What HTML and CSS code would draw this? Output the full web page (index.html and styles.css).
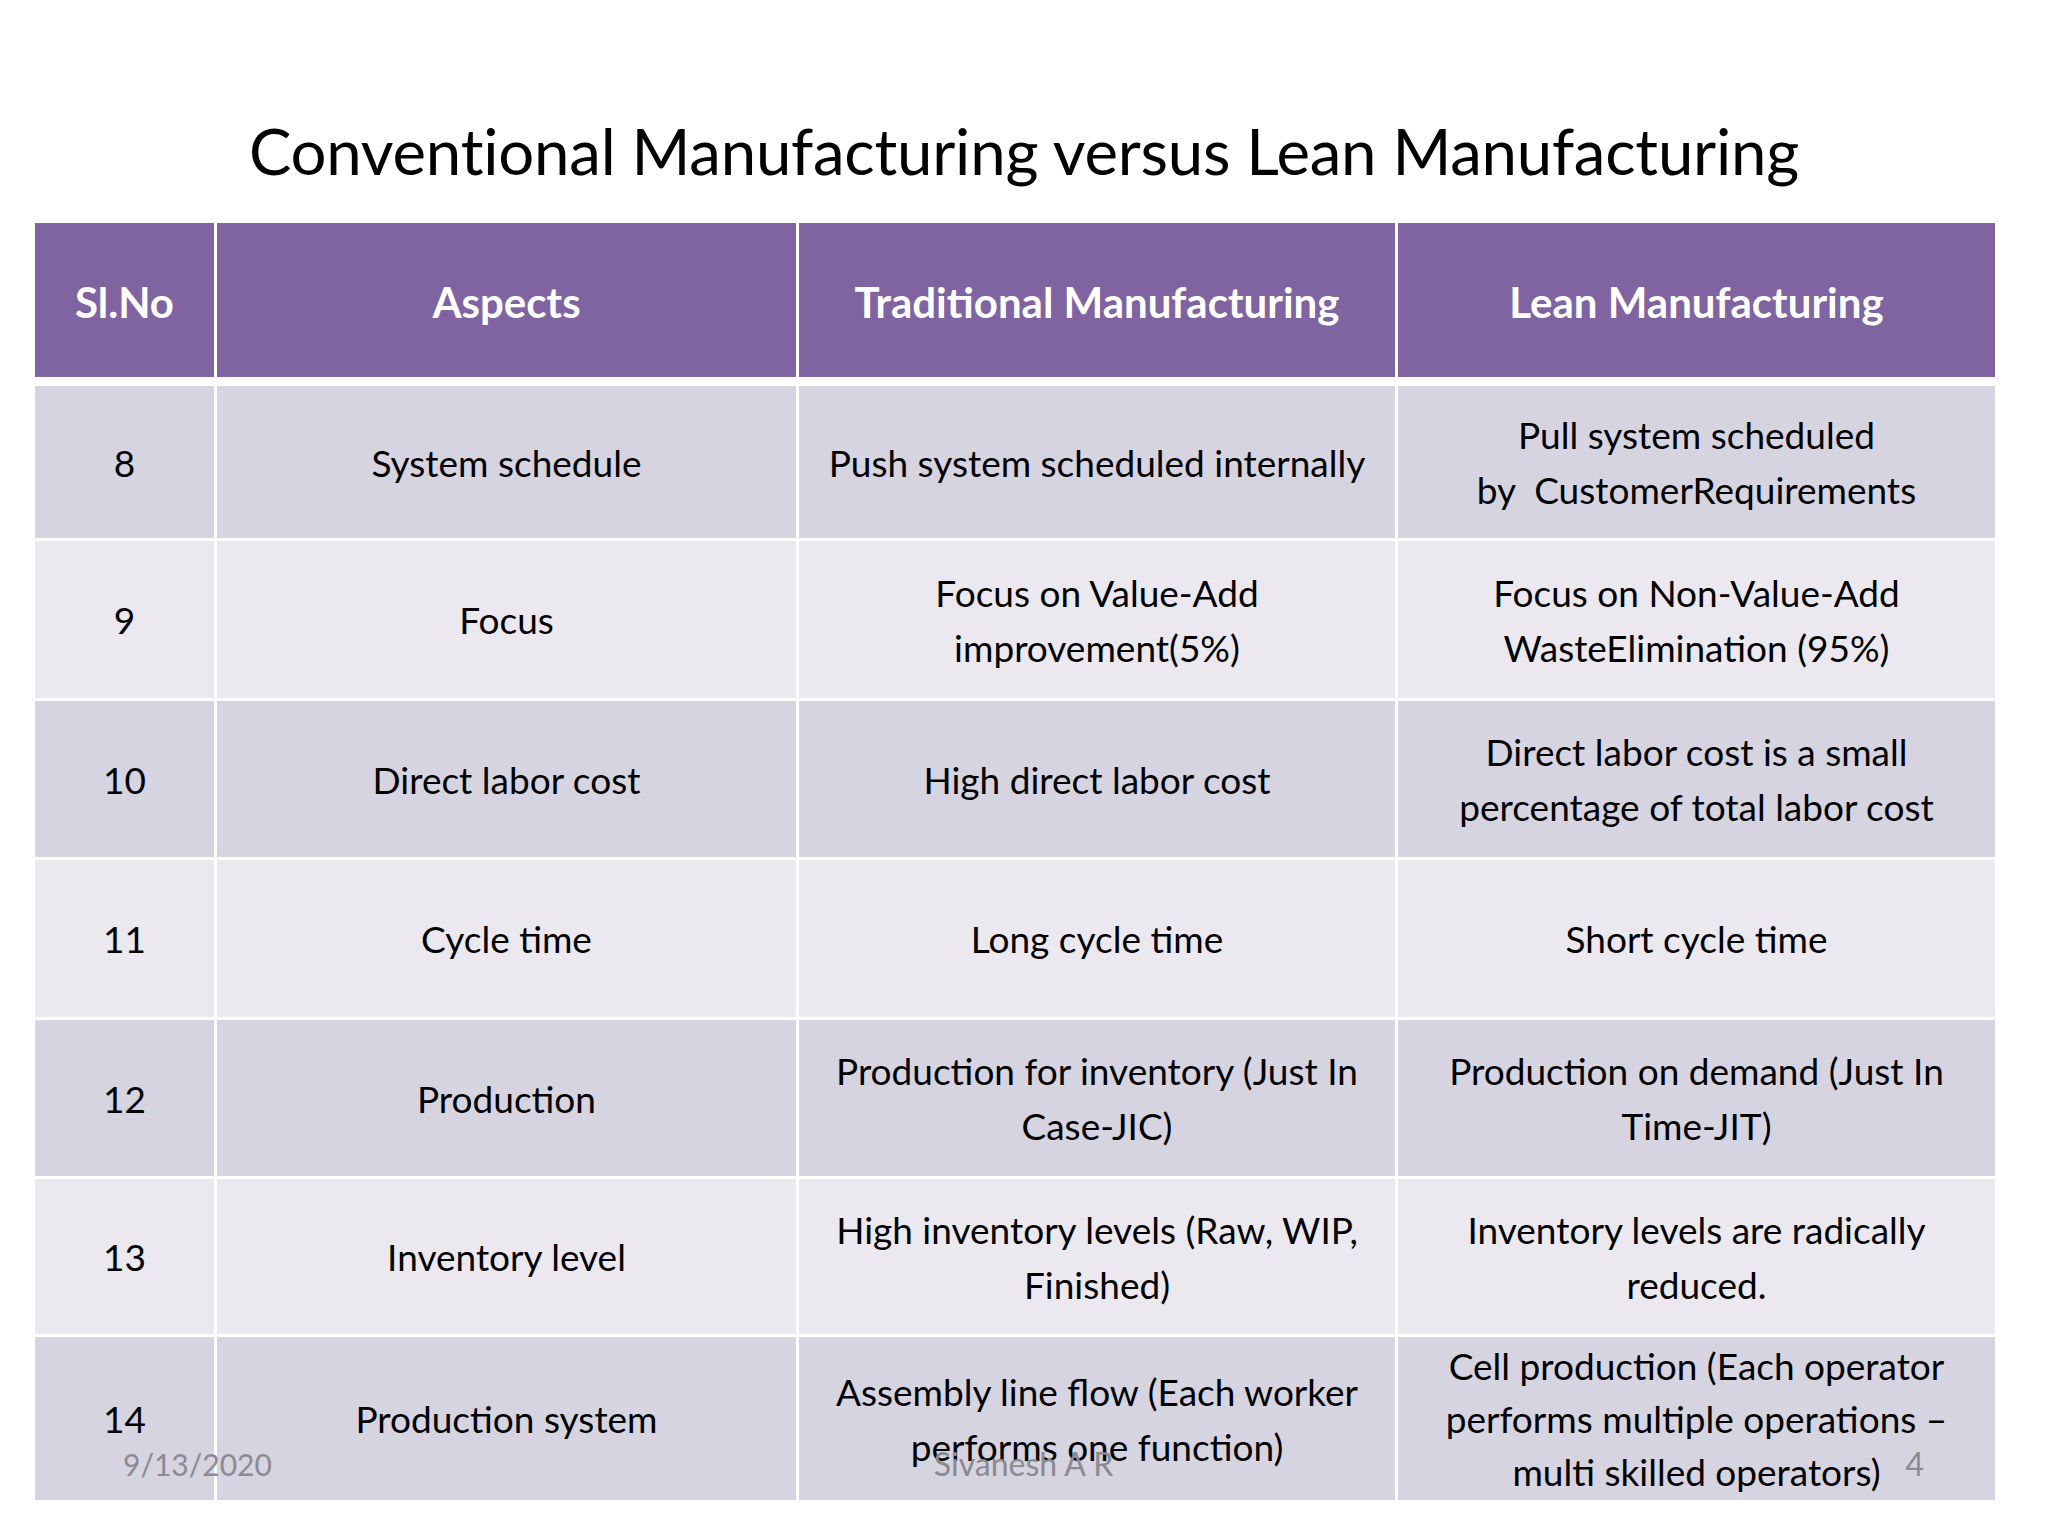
FILE: index.html
```html
<!DOCTYPE html>
<html>
<head>
<meta charset="utf-8">
<link rel="stylesheet" href="styles.css">
</head>
<body>
<div class="slide">
  <h1 class="title">Conventional Manufacturing versus Lean Manufacturing</h1>
  <div class="table">
    <div class="head">
      <div class="cell">Sl.No</div>
      <div class="cell">Aspects</div>
      <div class="cell">Traditional Manufacturing</div>
      <div class="cell">Lean Manufacturing</div>
    </div>
    <div class="body">
      <div class="cell odd">8</div>
      <div class="cell odd">System schedule</div>
      <div class="cell odd">Push system scheduled internally</div>
      <div class="cell odd">Pull system scheduled<br>by&nbsp; CustomerRequirements</div>

      <div class="cell even">9</div>
      <div class="cell even">Focus</div>
      <div class="cell even">Focus on Value-Add<br>improvement(5%)</div>
      <div class="cell even">Focus on Non-Value-Add<br>WasteElimination (95%)</div>

      <div class="cell odd">10</div>
      <div class="cell odd">Direct labor cost</div>
      <div class="cell odd">High direct labor cost</div>
      <div class="cell odd">Direct labor cost is a small<br>percentage of total labor cost</div>

      <div class="cell even">11</div>
      <div class="cell even">Cycle time</div>
      <div class="cell even">Long cycle time</div>
      <div class="cell even">Short cycle time</div>

      <div class="cell odd">12</div>
      <div class="cell odd">Production</div>
      <div class="cell odd">Production for inventory (Just In<br>Case-JIC)</div>
      <div class="cell odd">Production on demand (Just In<br>Time-JIT)</div>

      <div class="cell even">13</div>
      <div class="cell even">Inventory level</div>
      <div class="cell even">High inventory levels (Raw, WIP,<br>Finished)</div>
      <div class="cell even">Inventory levels are radically<br>reduced.</div>

      <div class="cell odd">14</div>
      <div class="cell odd">Production system</div>
      <div class="cell odd">Assembly line flow (Each worker<br>performs one function)</div>
      <div class="cell odd tight">Cell production (Each operator<br>performs multiple operations –<br>multi skilled operators)</div>
    </div>
  </div>
  <div class="footer">
    <span class="f-date">9/13/2020</span>
    <span class="f-author">Sivanesh A R</span>
    <span class="f-num">4</span>
  </div>
</div>
</body>
</html>
```
FILE: styles.css
```css
html, body {
  margin: 0;
  padding: 0;
  background: #ffffff;
}

.slide {
  position: relative;
  width: 2048px;
  height: 1536px;
  box-sizing: border-box;
  padding-top: 112px;
  font-family: Lato, "Liberation Sans", sans-serif;
  color: #000000;
}

.title {
  margin: 0;
  font-weight: 400;
  font-size: 63.5px;
  line-height: 77px;
  text-align: center;
  letter-spacing: -0.2px;
}

.table {
  margin: 34px 0 0 35px;
  width: 1960px;
}

.head,
.body {
  display: grid;
  grid-template-columns: 179px 579px 596px 597px;
  column-gap: 3px;
  row-gap: 3px;
}

.head {
  grid-template-rows: 154px;
}

.body {
  margin-top: 9px;
  grid-template-rows: 152px 157px 156px 157px 156px 155px 163px;
}

.cell {
  display: flex;
  align-items: center;
  justify-content: center;
  text-align: center;
  white-space: nowrap;
  font-size: 37px;
  line-height: 55px;
}

.head .cell {
  background: #8064a2;
  color: #ffffff;
  font-weight: 700;
  font-size: 42px;
  padding-top: 4px;
  box-sizing: border-box;
}

.odd {
  background: #d7d4e1;
}

.even {
  background: #ebe9ef;
}

.tight {
  line-height: 53px;
}

.footer {
  position: absolute;
  left: 123px;
  width: 1801px;
  top: 1444px;
  display: grid;
  grid-template-columns: 1fr auto 1fr;
  font-size: 32px;
  line-height: 40px;
  color: #8b8a93;
}

.f-date {
  justify-self: start;
  font-size: 30px;
}

.f-author {
  justify-self: center;
}

.f-num {
  justify-self: end;
}
```
